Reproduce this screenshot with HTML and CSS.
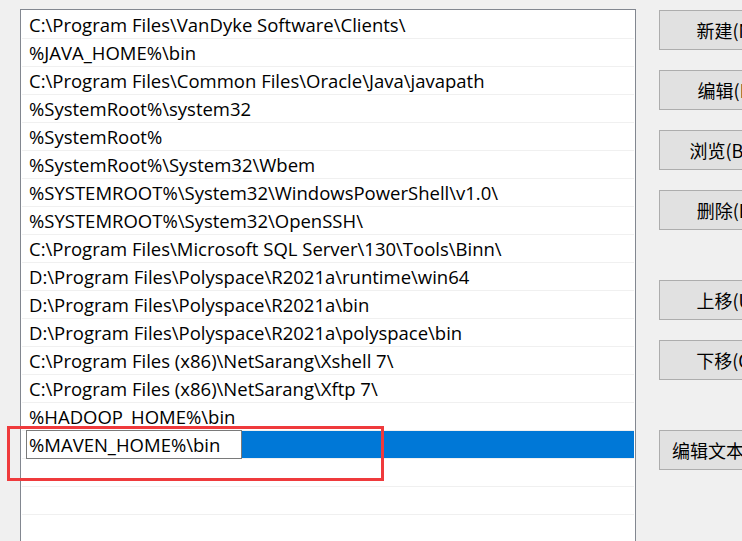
FILE: index.html
```html
<!DOCTYPE html>
<html lang="zh-CN">
<head>
<meta charset="utf-8">
<link rel="stylesheet" href="styles.css">
</head>
<body>
<div class="dialog">
  <div class="list">
    <div class="row">C:\Program Files\VanDyke Software\Clients\</div>
    <div class="row">%JAVA_HOME%\bin</div>
    <div class="row">C:\Program Files\Common Files\Oracle\Java\javapath</div>
    <div class="row">%SystemRoot%\system32</div>
    <div class="row">%SystemRoot%</div>
    <div class="row">%SystemRoot%\System32\Wbem</div>
    <div class="row">%SYSTEMROOT%\System32\WindowsPowerShell\v1.0\</div>
    <div class="row">%SYSTEMROOT%\System32\OpenSSH\</div>
    <div class="row">C:\Program Files\Microsoft SQL Server\130\Tools\Binn\</div>
    <div class="row">D:\Program Files\Polyspace\R2021a\runtime\win64</div>
    <div class="row">D:\Program Files\Polyspace\R2021a\bin</div>
    <div class="row">D:\Program Files\Polyspace\R2021a\polyspace\bin</div>
    <div class="row">C:\Program Files (x86)\NetSarang\Xshell 7\</div>
    <div class="row">C:\Program Files (x86)\NetSarang\Xftp 7\</div>
    <div class="row">%HADOOP_HOME%\bin</div>
    <div class="row selected"><span class="edit">%MAVEN_HOME%\bin</span><span class="fill"></span></div>
    <div class="row"></div>
    <div class="row"></div>
    <div class="row"></div>
  </div>
  <div class="buttons">
    <button class="btn">新建(N)</button>
    <button class="btn">编辑(E)</button>
    <button class="btn">浏览(B)...</button>
    <button class="btn">删除(D)</button>
    <button class="btn gap">上移(U)</button>
    <button class="btn">下移(O)</button>
    <button class="btn gap">编辑文本(T)...</button>
  </div>
</div>
<div class="highlight"></div>
</body>
</html>
```
FILE: styles.css
```css
html, body {
  margin: 0;
  padding: 0;
  background: #f0f0f0;
  overflow: hidden;
  width: 742px;
  height: 541px;
}
.dialog {
  display: flex;
  align-items: flex-start;
  padding: 9px 0 0 20px;
  font-family: "Open Sans", "Noto Sans CJK SC", sans-serif;
  font-size: 18.5px;
  color: #000;
}
.list {
  flex: none;
  width: 612px;
  height: 560px;
  border: 1px solid #828790;
  background: #fff;
  padding: 1px 1px 0;
}
.row {
  height: 27px;
  border-bottom: 1px solid #f0f0f0;
  padding-left: 7px;
  line-height: 27px;
  white-space: nowrap;
  overflow: hidden;
}
.row.selected {
  padding-left: 4px;
  display: flex;
  align-items: stretch;
  overflow: visible;
}
.edit {
  flex: none;
  display: block;
  width: 212px;
  height: 27px;
  margin: -1px 0;
  background: #fff;
  border: 1px solid #7a7a7a;
  padding-left: 2px;
  line-height: 27px;
}
.fill {
  flex: 1;
  background: #0078d7;
}
.buttons {
  flex: none;
  display: flex;
  flex-direction: column;
  gap: 20px;
  margin-left: 23px;
  margin-top: 1px;
}
.btn {
  width: 136px;
  height: 40px;
  background: #e1e1e1;
  border: 1px solid #adadad;
  font-family: "Noto Sans CJK SC", sans-serif;
  font-size: 18px;
  color: #000;
  padding: 0;
  white-space: nowrap;
}
.btn.gap {
  margin-top: 30px;
}
.highlight {
  position: absolute;
  left: 7px;
  top: 426px;
  width: 371px;
  height: 49px;
  border: 3px solid #ef3a3c;
}
```
